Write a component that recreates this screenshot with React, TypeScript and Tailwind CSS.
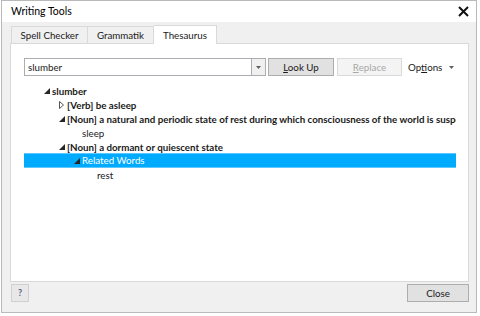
import React from "react";

const font = { fontFamily: 'Lato, "Noto Sans", sans-serif' };

function Expanded() {
  return (
    <svg width="6" height="6" viewBox="0 0 6 6" className="shrink-0">
      <polygon points="6,0 6,6 0,6" fill="#262626" />
    </svg>
  );
}

function Collapsed() {
  return (
    <svg width="5" height="8" viewBox="0 0 5 8" className="shrink-0">
      <polygon points="0.5,0.5 4.5,4 0.5,7.5" fill="none" stroke="#555" strokeWidth="1" />
    </svg>
  );
}

type Row = {
  level: number;
  text: string;
  bold?: boolean;
  icon?: "exp" | "col" | "none";
  selected?: boolean;
};

const rows: Row[] = [
  { level: 0, text: "slumber", bold: true, icon: "exp" },
  { level: 1, text: "[Verb] be asleep", bold: true, icon: "col" },
  {
    level: 1,
    text: "[Noun] a natural and periodic state of rest during which consciousness of the world is suspended",
    bold: true,
    icon: "exp",
  },
  { level: 2, text: "sleep", icon: "none" },
  { level: 1, text: "[Noun] a dormant or quiescent state", bold: true, icon: "exp" },
  { level: 2, text: "Related Words", icon: "exp", selected: true },
  { level: 3, text: "rest", icon: "none" },
];

export default function App() {
  return (
    <div className="w-[480px] h-[316px] bg-white overflow-hidden" style={font}>
      <div className="ml-px w-[476px] h-[313px] border border-[#b9b9b9] flex flex-col text-[9.75px] text-[#1a1a1a]">
        <div className="h-[21px] bg-white flex items-center justify-between pl-[9px] pr-[7px] shrink-0">
          <span className="text-[10.5px] text-black">Writing Tools</span>
          <svg width="11" height="11" viewBox="0 0 11 11">
            <path d="M1 1 L10 10 M10 1 L1 10" stroke="#111" strokeWidth="2" />
          </svg>
        </div>
        <div className="flex-1 bg-[#f0f0f0] flex flex-col pl-[8px] pr-[7px]">
          <div className="flex items-end h-[21px] pl-px">
            <div className="w-[77px] h-[17px] flex items-center justify-center border border-b-0 border-[#d9d9d9] bg-[#f0f0f0]">
              Spell Checker
            </div>
            <div className="w-[66px] h-[17px] flex items-center justify-center border border-b-0 border-l-0 border-[#d9d9d9] bg-[#f0f0f0]">
              Grammatik
            </div>
            <div className="w-[63px] h-[19px] flex items-center justify-center border border-b-0 border-l-0 border-[#d9d9d9] bg-white -mb-px relative z-10">
              Thesaurus
            </div>
          </div>
          <div className="h-[239px] bg-white border border-[#d9d9d9] pt-[14px] pl-[13px] pr-[11px]">
            <div className="flex items-center h-[18px]">
              <div className="w-[228px] h-[18px] border border-[#abadb3] flex items-center pl-[3px]">
                slumber
              </div>
              <div className="w-[14px] h-[18px] border border-l-0 border-[#abadb3] bg-[#f0f0f0] flex items-center justify-center">
                <svg width="5" height="3" viewBox="0 0 5 3">
                  <polygon points="0,0 5,0 2.5,3" fill="#606060" />
                </svg>
              </div>
              <div className="ml-[2px] w-[66px] h-[18px] border border-[#adadad] bg-[#e1e1e1] flex items-center justify-center">
                <span>
                  <span className="underline">L</span>ook Up
                </span>
              </div>
              <div className="ml-[3px] w-[65px] h-[18px] border border-[#dadada] bg-[#f4f4f4] flex items-center justify-center text-[#a8a8a8]">
                <span>
                  <span className="underline">R</span>eplace
                </span>
              </div>
              <div className="ml-[6px] flex items-center">
                <span>
                  Op<span className="underline">t</span>ions
                </span>
                <svg width="5" height="3" viewBox="0 0 5 3" className="ml-[7px]">
                  <polygon points="0,0 5,0 2.5,3" fill="#606060" />
                </svg>
              </div>
            </div>
            <div className="mt-[8px] w-[432px] overflow-hidden">
              {rows.map((r, i) => (
                <div
                  key={i}
                  className={
                    "flex items-center whitespace-nowrap " +
                    (r.selected
                      ? "bg-[#00aaff] text-white h-[15px] -mt-px border-y border-[#5cc8ff]"
                      : "h-[14px]")
                  }
                  style={{ paddingLeft: 20 + r.level * 15 }}
                >
                  <div className="w-[8px] flex items-center shrink-0">
                    {r.icon === "exp" && <Expanded />}
                    {r.icon === "col" && <Collapsed />}
                  </div>
                  <span className={r.bold ? "font-bold" : ""}>{r.text}</span>
                </div>
              ))}
            </div>
          </div>
          <div className="flex items-center justify-between pt-[2px] pl-px">
            <div className="w-[18px] h-[18px] border border-[#d0d0d0] bg-[#e8e8e8] flex items-center justify-center text-[9px] font-bold text-[#5a5a8a]">
              ?
            </div>
            <div className="w-[62px] h-[18px] border border-[#adadad] bg-[#e1e1e1] flex items-center justify-center">
              Close
            </div>
          </div>
        </div>
      </div>
    </div>
  );
}
